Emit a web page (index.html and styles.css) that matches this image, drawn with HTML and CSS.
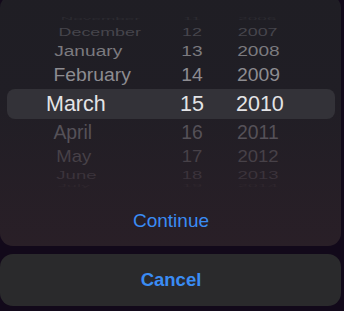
FILE: index.html
```html
<!DOCTYPE html>
<html>
<head>
<meta charset="utf-8">
<link rel="stylesheet" href="styles.css">
</head>
<body>
<div class="sheet">
  <div class="card">
    <div class="picker">
      <div class="row r-nov"><span class="m">November</span><span class="n">11</span><span class="y">2006</span></div>
      <div class="row r-dec"><span class="m">December</span><span class="n">12</span><span class="y">2007</span></div>
      <div class="row r-jan"><span class="m">January</span><span class="n">13</span><span class="y">2008</span></div>
      <div class="row r-feb"><span class="m">February</span><span class="n">14</span><span class="y">2009</span></div>
      <div class="row r-sel"><span class="m">March</span><span class="n">15</span><span class="y">2010</span></div>
      <div class="row r-apr"><span class="m">April</span><span class="n">16</span><span class="y">2011</span></div>
      <div class="row r-may"><span class="m">May</span><span class="n">17</span><span class="y">2012</span></div>
      <div class="row r-jun"><span class="m">June</span><span class="n">18</span><span class="y">2013</span></div>
      <div class="row r-jul"><span class="m">July</span><span class="n">19</span><span class="y">2014</span></div>
    </div>
    <div class="action">Continue</div>
  </div>
  <div class="cancel">Cancel</div>
</div>
</body>
</html>
```

FILE: styles.css
```css
html, body {
  margin: 0;
  padding: 0;
}
body {
  width: 344px;
  height: 311px;
  overflow: hidden;
  background: #12091a;
  font-family: "Liberation Sans", Arial, sans-serif;
}
.sheet {
  display: flex;
  flex-direction: column;
  width: 341px;
}
.card {
  margin-top: -5px;
  height: 251px;
  border-radius: 13px;
  background: linear-gradient(180deg, #1f1e24 0%, #201e25 40%, #291f27 100%);
  display: flex;
  flex-direction: column;
  padding-top: 19px;
  box-sizing: border-box;
}
.picker {
  height: 175px;
  overflow: hidden;
  display: flex;
  flex-direction: column;
}
.row {
  --sx: 1;
  --sy: 1;
  display: grid;
  grid-template-columns: 124px 44px 52px;
  margin: 0 6px 0 7px;
  padding-left: 39px;
  font-size: 21.5px;
  white-space: nowrap;
  flex: none;
}
.row span {
  display: block;
  transform: scale(var(--sx), var(--sy));
}
.row .m {
  text-align: left;
  transform-origin: 74px 50%;
}
.row .n {
  text-align: center;
  transform-origin: 50% 50%;
}
.row .y {
  margin-left: 22px;
  text-align: center;
  transform-origin: 35% 50%;
}
.r-nov { height: 10px; line-height: 10px; color: #2c2b31; --sx: 0.8; --sy: 0.2; }
.r-dec { height: 17px; line-height: 17px; color: #46454c; --sx: 0.83; --sy: 0.5; }
.r-jan { height: 21px; line-height: 21px; color: #7b7a7f; --sx: 0.89; --sy: 0.68; }
.r-feb { height: 27px; line-height: 27px; color: #8d8c91; --sx: 0.9; --sy: 0.86; }
.r-sel {
  height: 30px;
  line-height: 30px;
  color: #e4e4e6;
  background: #333238;
  border-radius: 8px;
}
.r-apr { height: 28px; line-height: 28px; color: #555158; --sx: 0.9; --sy: 0.9; }
.r-may { height: 20px; line-height: 20px; color: #474148; --sx: 0.86; --sy: 0.76; }
.r-jun { height: 16px; line-height: 16px; color: #3b333b; --sx: 0.86; --sy: 0.5; }
.r-jul { height: 6px; line-height: 6px; color: #2e262d; --sx: 0.84; --sy: 0.2; }
.action {
  margin-top: 6px;
  height: 51px;
  line-height: 51px;
  text-align: center;
  color: #3a8cf4;
  font-size: 19px;
  padding-left: 1px;
}
.cancel {
  margin-top: 8px;
  height: 52px;
  line-height: 52px;
  border-radius: 13px;
  background: #2a2a2c;
  text-align: center;
  color: #3a8cf4;
  font-size: 18.5px;
  font-weight: bold;
  padding-left: 1px;
}
```
